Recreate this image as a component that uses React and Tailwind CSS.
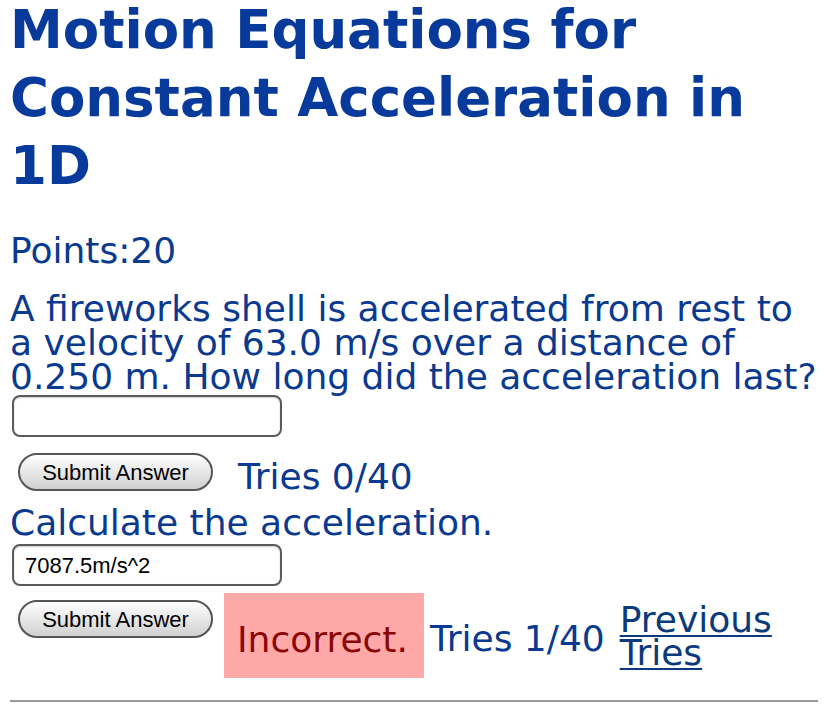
export default function App() {
  return (
    <div className="min-h-screen bg-white px-[10px] font-['DejaVu_Sans',sans-serif] text-[#0a3a8f]">
      <h1 className="mt-[-4px] text-[53px] font-bold leading-[68px] text-[#073a9b]">
        Motion Equations for
        <br />
        Constant Acceleration in
        <br />
        1D
      </h1>

      <p className="mt-[29px] text-[36px] leading-[44px]">Points:20</p>

      <p className="mt-[19px] text-[36px] leading-[34px]">
        A fireworks shell is accelerated from rest to
        <br />
        a velocity of 63.0 m/s over a distance of
        <br />
        0.250 m. How long did the acceleration last?
      </p>

      <AnswerBox value="" />

      <div className="mt-[16px] flex items-start gap-[25px]">
        <SubmitButton />
        <span className="mt-[4px] text-[36px] leading-[40px]">Tries 0/40</span>
      </div>

      <p className="mt-[6px] text-[36px] leading-[40px]">
        Calculate the acceleration.
      </p>

      <AnswerBox value="7087.5m/s^2" />

      <div className="mt-[7px] flex items-start">
        <div className="mt-[7px]">
          <SubmitButton />
        </div>
        <div className="ml-[11px] flex items-end">
          <span className="w-[200px] bg-[#ffa8a8] pb-[19px] pl-[13px] pt-[28px] text-[36px] leading-[38px] text-[#8a0505]">
            Incorrect.
          </span>
          <span className="mb-[20px] ml-[6px] text-[36px] leading-[38px]">
            Tries 1/40
          </span>
          <a
            href="#"
            className="mb-[9px] ml-[15px] text-[36px] leading-[33px] text-[#0b3a7c] underline decoration-[2px] underline-offset-[3px]"
          >
            Previous
            <br />
            Tries
          </a>
        </div>
      </div>

      <hr className="mt-[22px] border-t-[2px] border-[#9a9a9a]" />
    </div>
  );
}

function AnswerBox({ value }) {
  return (
    <div className="ml-[2px] mt-[1px] flex h-[42px] w-[270px] items-center rounded-[8px] border-[2px] border-[#5a5a5a] bg-white px-[11px] font-['Liberation_Sans',sans-serif] text-[22px] text-black shadow-[inset_0_1px_2px_rgba(0,0,0,0.2)]">
      {value}
    </div>
  );
}

function SubmitButton() {
  return (
    <button className="ml-[8px] h-[38px] w-[195px] shrink-0 rounded-full border-[2px] border-[#555] bg-gradient-to-b from-white to-[#d0d0d0] font-['Liberation_Sans',sans-serif] text-[22px] text-black">
      Submit Answer
    </button>
  );
}
